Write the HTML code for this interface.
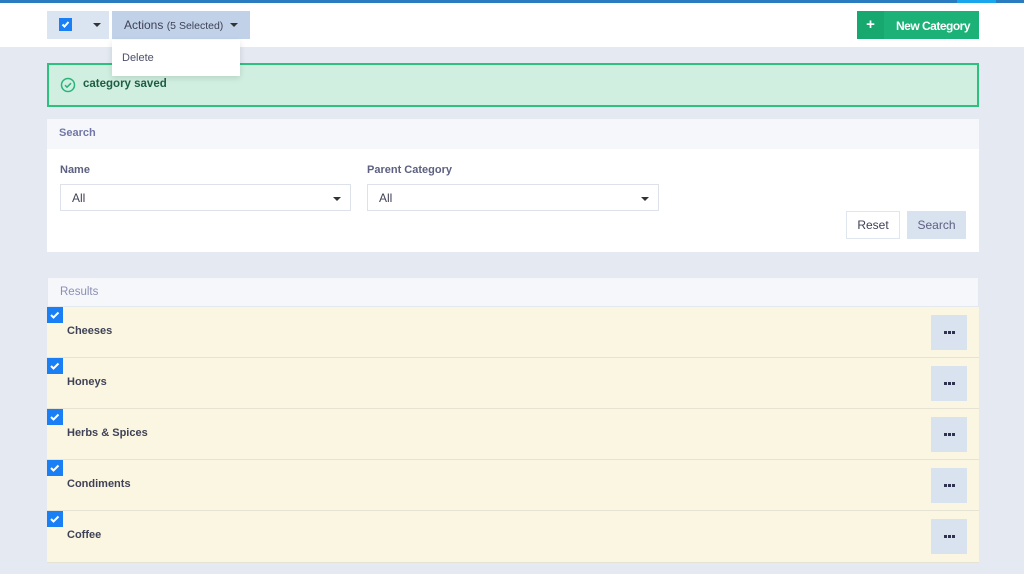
<!DOCTYPE html>
<html><head><style>
*{margin:0;padding:0;box-sizing:border-box}
body{width:1024px;height:574px;background:#e4e9f2;font-family:"Liberation Sans",sans-serif;position:relative;overflow:hidden;font-size:12px;color:#3f4257}
.a{position:absolute}
.cb{position:absolute;width:16px;height:16px;background:#1a7ef5;}
.cb svg{display:block}
.row{position:absolute;left:47px;width:932px;height:51px;background:#fbf6e1;border-bottom:1px solid #e6e3d4}
.row .t{position:absolute;left:20px;top:18px;font-weight:bold;font-size:11px;color:#3f4257}
.row .cb{left:0;top:0}
.dots{position:absolute;left:884px;top:8px;width:36px;height:35px;background:#d9e3f0}
.dots i{position:absolute;top:16px;width:3px;height:3px;background:#2f3350}
.sel{position:absolute;height:27px;border:1px solid #dde2ea;background:#fff;font-size:12px;padding:6px 11px;color:#3f4257}
.sel:after{content:"";position:absolute;right:9px;top:12px;border:4px solid transparent;border-top:4px solid #333;border-bottom:0}
</style></head><body>
<div class="a" style="left:0;top:0;width:1024px;height:47px;background:#fff"></div>
<div class="a" style="left:0;top:0;width:1024px;height:3px;background:#2a7cc0"></div>
<div class="a" style="left:957px;top:0;width:39px;height:3px;background:#1aa6ec"></div>

<div class="a" style="left:47px;top:11px;width:62px;height:28px;background:#dbe4f1"></div>
<div class="cb" style="left:59px;top:18px;width:13px;height:13px"><svg width="13" height="13"><path d="M3.5 6.5l2 2 4-4.5" stroke="#fff" stroke-width="2" fill="none"/></svg></div>
<div class="a" style="left:93px;top:23px;border:4px solid transparent;border-top:4px solid #333;border-bottom:0"></div>
<div class="a" style="left:112px;top:11px;width:138px;height:28px;background:#c0d1e8;font-size:12px;padding:7px 12px;color:#3f4257">Actions <span style="font-size:10.5px">(5 Selected)</span></div>
<div class="a" style="left:230px;top:23px;border:4px solid transparent;border-top:4px solid #333;border-bottom:0"></div>
<div class="a" style="left:857px;top:11px;width:122px;height:28px;background:#1bb177;color:#fff;font-weight:bold;font-size:12px">
<div class="a" style="left:0;top:0;width:27px;height:28px;background:#17a86f;text-align:center;line-height:28px;font-size:15px">+</div>
<div class="a" style="left:39px;top:8px;letter-spacing:-0.5px">New Category</div></div>

<div class="a" style="left:47px;top:63px;width:932px;height:44px;background:#d0efe1;border:2px solid #2ec07f"></div>
<div class="a" style="left:60px;top:77px"><svg width="16" height="16"><circle cx="8" cy="8" r="6.5" stroke="#2ab37a" stroke-width="1.5" fill="none"/><path d="M5 8.2l2 2 4-4" stroke="#2ab37a" stroke-width="1.5" fill="none"/></svg></div>
<div class="a" style="left:83px;top:78px;font-weight:bold;font-size:11.5px;color:#1f5d45">category saved</div>

<div class="a" style="left:112px;top:40px;width:128px;height:36px;background:#fff;box-shadow:0 2px 6px rgba(0,0,0,.12);font-size:11px;padding:12px 10px;color:#4c4f6a">Delete</div>

<div class="a" style="left:47px;top:119px;width:932px;height:133px;background:#fff"></div>
<div class="a" style="left:47px;top:119px;width:932px;height:30px;background:#f5f7fb;font-weight:bold;font-size:11px;color:#7176a6;padding:8px 12px">Search</div>
<div class="a" style="left:60px;top:164px;font-weight:bold;font-size:11px;color:#5d6080">Name</div>
<div class="a" style="left:367px;top:164px;font-weight:bold;font-size:11px;color:#5d6080">Parent Category</div>
<div class="sel" style="left:60px;top:184px;width:291px">All</div>
<div class="sel" style="left:367px;top:184px;width:292px">All</div>
<div class="a" style="left:846px;top:211px;width:54px;height:28px;border:1px solid #e0e6ef;background:#fff;text-align:center;line-height:26px;font-size:12px">Reset</div>
<div class="a" style="left:907px;top:211px;width:59px;height:28px;background:#d9e3f0;text-align:center;line-height:28px;font-size:12px;color:#5d6080">Search</div>

<div class="a" style="left:47px;top:277px;width:932px;height:30px;background:#f5f7fb;border:1px solid #e4e8ef;font-size:11.5px;color:#8b8fb5;padding:8px 12px">Results</div>

<div class="row" style="top:307px"><div class="cb"><svg width="16" height="16"><path d="M4 8l2.5 2.5 5-5" stroke="#fff" stroke-width="2" fill="none"/></svg></div><div class="t">Cheeses</div><div class="dots"><i style="left:13px"></i><i style="left:17px"></i><i style="left:21px"></i></div></div>
<div class="row" style="top:358px"><div class="cb"><svg width="16" height="16"><path d="M4 8l2.5 2.5 5-5" stroke="#fff" stroke-width="2" fill="none"/></svg></div><div class="t">Honeys</div><div class="dots"><i style="left:13px"></i><i style="left:17px"></i><i style="left:21px"></i></div></div>
<div class="row" style="top:409px"><div class="cb"><svg width="16" height="16"><path d="M4 8l2.5 2.5 5-5" stroke="#fff" stroke-width="2" fill="none"/></svg></div><div class="t">Herbs &amp; Spices</div><div class="dots"><i style="left:13px"></i><i style="left:17px"></i><i style="left:21px"></i></div></div>
<div class="row" style="top:460px"><div class="cb"><svg width="16" height="16"><path d="M4 8l2.5 2.5 5-5" stroke="#fff" stroke-width="2" fill="none"/></svg></div><div class="t">Condiments</div><div class="dots"><i style="left:13px"></i><i style="left:17px"></i><i style="left:21px"></i></div></div>
<div class="row" style="top:511px;height:52px"><div class="cb"><svg width="16" height="16"><path d="M4 8l2.5 2.5 5-5" stroke="#fff" stroke-width="2" fill="none"/></svg></div><div class="t">Coffee</div><div class="dots"><i style="left:13px"></i><i style="left:17px"></i><i style="left:21px"></i></div></div>
</body></html>
